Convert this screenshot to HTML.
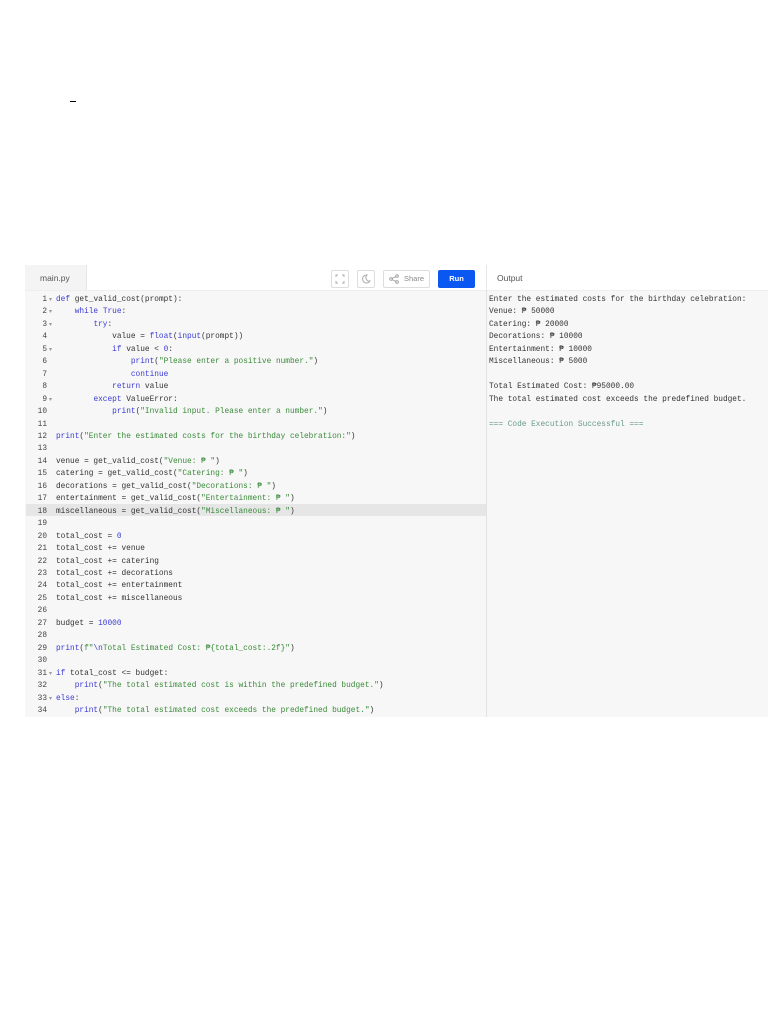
<!DOCTYPE html>
<html><head><style>
body{margin:0;width:768px;height:1024px;background:#fff;position:relative;font-family:"Liberation Sans",sans-serif;overflow:hidden}
.p{position:absolute}
.mono{font-family:"Liberation Mono",monospace;font-size:7.8px;white-space:pre}
#wrap{left:25px;top:265px;width:745px;height:452px;background:#f7f7f7}
.ln{position:absolute;left:0;width:22px;text-align:right;color:#444}
.ar{position:absolute;left:24px;color:#999;font-size:6px}
.cl{position:absolute;left:31px;color:#333}
.k{color:#3b3bd6}.s{color:#3a8a3a}.n{color:#3b3bd6}.g{color:#777}
.btn{position:absolute;top:5px;height:18px;border:1px solid #ddd;background:#fff;box-sizing:border-box;border-radius:2px}
</style></head><body>
<div class="p" style="left:70px;top:101px;width:6px;height:1px;background:#000"></div>
<div id="wrap" class="p">
 <div class="p" style="left:0;top:0;width:461px;height:25px;background:#fff;border-bottom:1px solid #eee"></div>
 <div class="p" style="left:0;top:0;width:61px;height:25px;background:#f4f4f4;border-right:1px solid #e6e6e6"></div>
 <div class="p" style="left:15px;top:8px;font-size:8.5px;color:#555">main.py</div>
 <div class="btn" style="left:306px;width:18px"><svg width="16" height="16" viewBox="0 0 16 16" fill="none" stroke="#aaa" stroke-width="1"><path d="M4 6V4h2M10 4h2v2M12 10v2h-2M6 12H4v-2"/></svg></div>
 <div class="btn" style="left:332px;width:18px"><svg width="16" height="16" viewBox="0 0 16 16" fill="none" stroke="#aaa" stroke-width="1"><path d="M9 4a4 4 0 1 0 3 6a3.5 3.5 0 0 1-3-6z"/></svg></div>
 <div class="btn" style="left:358px;width:47px;font-size:7.5px;color:#888;line-height:16px"><svg style="position:absolute;left:5px;top:3px" width="10" height="10" viewBox="0 0 10 10" fill="none" stroke="#999" stroke-width=".9"><circle cx="2" cy="5" r="1.3"/><circle cx="8" cy="2" r="1.3"/><circle cx="8" cy="8" r="1.3"/><path d="M3 4.4L7 2.6M3 5.6L7 7.4"/></svg><span style="position:absolute;left:20px">Share</span></div>
 <div class="p" style="left:413px;top:5px;width:37px;height:18px;background:#0a57f2;border-radius:2px;color:#fff;font-size:7.5px;font-weight:bold;text-align:center;line-height:18px">Run</div>
 <div class="p" style="left:461px;top:0;width:284px;height:25px;background:#fff;border-left:1px solid #e6e6e6;border-bottom:1px solid #eee"></div>
 <div class="p" style="left:472px;top:8px;font-size:8.5px;color:#555">Output</div>
 <div class="p" style="left:461px;top:25px;width:1px;height:427px;background:#e2e2e2"></div>
 <div class="p" style="left:1px;top:239px;width:460px;height:12px;background:#e6e6e6"></div>
 <div class="p mono" style="left:0;top:29px;width:461px;line-height:12.45px"><div style="position:relative;height:424px"><div class="ln" style="top:0">1
2
3
4
5
6
7
8
9
10
11
12
13
14
15
16
17
18
19
20
21
22
23
24
25
26
27
28
29
30
31
32
33
34</div><div class="ar" style="top:0;line-height:12.45px">▾
▾
▾
 
▾
 
 
 
▾
 
 
 
 
 
 
 
 
 
 
 
 
 
 
 
 
 
 
 
 
 
▾
 
▾</div><div class="cl" style="top:0"><span class="k">def</span> get_valid_cost(prompt):
    <span class="k">while</span> <span class="n">True</span>:
        <span class="k">try</span>:
            value = <span class="k">float</span>(<span class="k">input</span>(prompt))
            <span class="k">if</span> value &lt; <span class="n">0</span>:
                <span class="k">print</span>(<span class="s">"Please enter a positive number."</span>)
                <span class="k">continue</span>
            <span class="k">return</span> value
        <span class="k">except</span> ValueError:
            <span class="k">print</span>(<span class="s">"Invalid input. Please enter a number."</span>)

<span class="k">print</span>(<span class="s">"Enter the estimated costs for the birthday celebration:"</span>)

venue = get_valid_cost(<span class="s">"Venue: ₱ "</span>)
catering = get_valid_cost(<span class="s">"Catering: ₱ "</span>)
decorations = get_valid_cost(<span class="s">"Decorations: ₱ "</span>)
entertainment = get_valid_cost(<span class="s">"Entertainment: ₱ "</span>)
miscellaneous = get_valid_cost(<span class="s">"Miscellaneous: ₱ "</span>)

total_cost = <span class="n">0</span>
total_cost += venue
total_cost += catering
total_cost += decorations
total_cost += entertainment
total_cost += miscellaneous

budget = <span class="n">10000</span>

<span class="k">print</span>(<span class="s">f"<span class="n">\n</span>Total Estimated Cost: ₱{total_cost:.2f}"</span>)

<span class="k">if</span> total_cost &lt;= budget:
    <span class="k">print</span>(<span class="s">"The total estimated cost is within the predefined budget."</span>)
<span class="k">else</span>:
    <span class="k">print</span>(<span class="s">"The total estimated cost exceeds the predefined budget."</span>)</div></div></div>
 <div class="p mono" style="left:464px;top:29px;line-height:12.45px;color:#333">Enter the estimated costs for the birthday celebration:
Venue: ₱ 50000
Catering: ₱ 20000
Decorations: ₱ 10000
Entertainment: ₱ 10000
Miscellaneous: ₱ 5000

Total Estimated Cost: ₱95000.00
The total estimated cost exceeds the predefined budget.

<span style="color:#6a9a8a">=== Code Execution Successful ===</span></div>
</div>
</body></html>
